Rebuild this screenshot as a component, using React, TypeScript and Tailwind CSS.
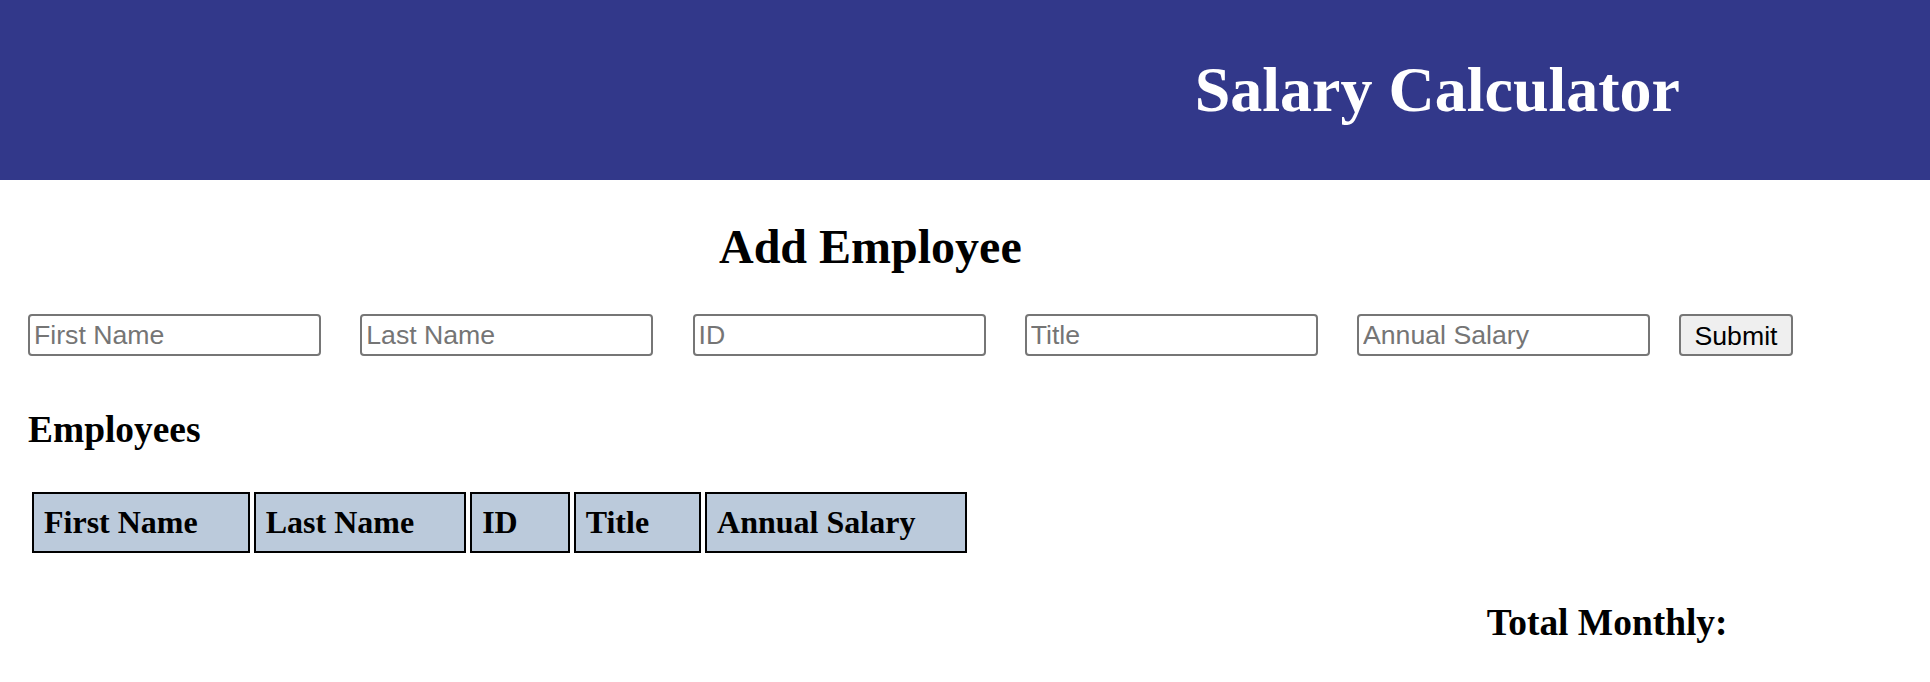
const fields = ["First Name", "Last Name", "ID", "Title", "Annual Salary"];
const columns = ["First Name", "Last Name", "ID", "Title", "Annual Salary"];

export default function App() {
  return (
    <div className="min-h-[682px] bg-white font-['Liberation_Serif','Times_New_Roman',serif] text-black">
      <header className="flex h-[180px] items-center justify-end bg-[#32388a] pr-[250px]">
        <h1 className="text-[64px] font-bold leading-[1.15] text-white">Salary Calculator</h1>
      </header>

      <main className="px-[28px]">
        <h2 className="mt-[38.5px] pl-[691px] text-[48px] font-bold leading-[1.15]">Add Employee</h2>

        <form className="mt-[40.5px] flex items-center" onSubmit={(e) => e.preventDefault()}>
          {fields.map((f, i) => (
            <input
              key={f}
              type="text"
              placeholder={f}
              className={`h-[42px] w-[293px] rounded-[4px] border-2 border-[#767676] bg-white px-[4px] font-['Liberation_Sans',Arial,sans-serif] text-[26.67px] text-black placeholder:text-[#757575] ${i < 4 ? "mr-[39.25px]" : "mr-[29px]"}`}
            />
          ))}
          <button
            type="submit"
            className="h-[42px] w-[114px] rounded-[4px] border-2 border-[#767676] bg-[#efefef] font-['Liberation_Sans',Arial,sans-serif] text-[26.67px] text-black"
          >
            Submit
          </button>
        </form>

        <h3 className="mt-[51.8px] text-[37.44px] font-bold leading-[1.15]">Employees</h3>

        <table className="mt-[37px] border-separate border-spacing-[4px]">
          <thead>
            <tr>
              {columns.map((c) => (
                <th
                  key={c}
                  className="border-2 border-black bg-[#bbcadb] py-[10px] pl-[10px] pr-[50px] text-left text-[32px] font-bold leading-[1.15]"
                >
                  {c}
                </th>
              ))}
            </tr>
          </thead>
          <tbody></tbody>
        </table>

        <h3 className="mt-[44px] pl-[1458.7px] text-[37.44px] font-bold leading-[1.15]">Total Monthly:</h3>
      </main>
    </div>
  );
}
